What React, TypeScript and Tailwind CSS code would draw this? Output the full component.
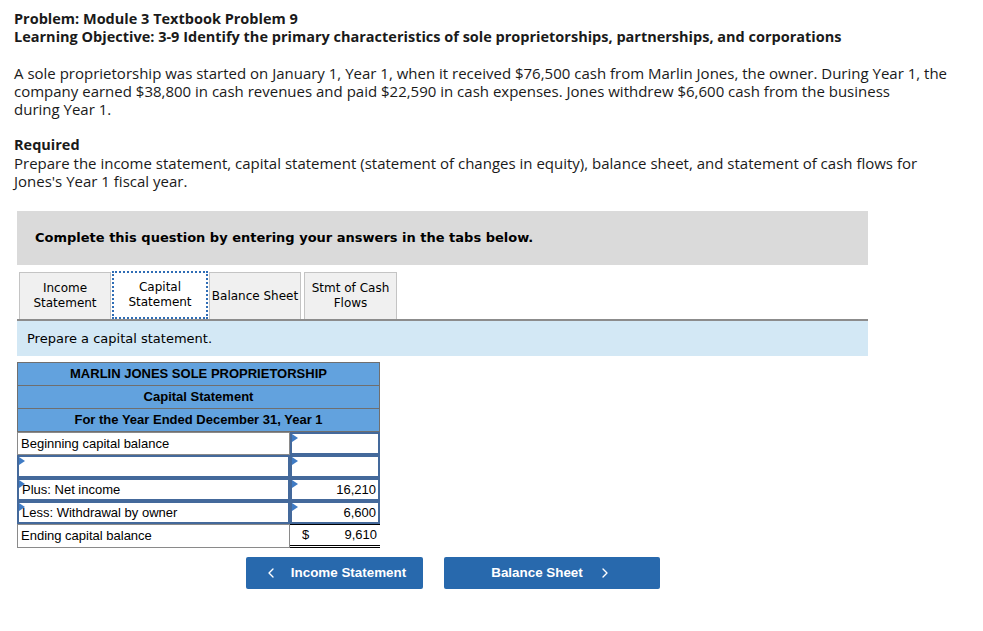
import { ChevronLeft, ChevronRight } from 'lucide-react';

function Flag() {
    return <span className="absolute left-0 top-0 w-0 h-0 border-t-[4px] border-b-[4px] border-l-[6px] border-t-transparent border-b-transparent border-l-[#3f7bc4]"></span>;
}

function LabelCell({ text, input }: { text?: string; input?: boolean }) {
    if (input) {
        return (
            <div className="relative h-[23px] w-[273px] border-2 border-[#44699b] flex items-center px-[3px]">
                <Flag />
                <span>{text}</span>
            </div>
        );
    }
    return (
        <div className="h-[23px] w-[273px] border border-[#8a8a8a] flex items-center px-[3px]">
            <span>{text}</span>
        </div>
    );
}

function ValueCell({ value }: { value?: string }) {
    return (
        <div className="relative h-[23px] w-[90px] border-2 border-[#44699b] flex items-center justify-end px-[2px]">
            <Flag />
            <span>{value}</span>
        </div>
    );
}

export default function App() {
    const body = { fontFamily: '"Open Sans", Lato, sans-serif' };
    const verdana = { fontFamily: '"DejaVu Sans", Verdana, sans-serif' };
    const arial = { fontFamily: '"Liberation Sans", Arial, sans-serif' };

    return (
        <div className="w-[983px] h-[631px] bg-white text-[#1a1a1a] pt-[10px]">
            <div className="pl-[14px] pr-[28px] text-[15px] leading-[18px]" style={body}>
                <p className="font-bold text-[14.5px]">Problem: Module 3 Textbook Problem 9</p>
                <p className="font-bold text-[14.5px]">Learning Objective: 3-9 Identify the primary characteristics of sole proprietorships, partnerships, and corporations</p>

                <p className="mt-[18px]">
                    A sole proprietorship was started on January 1, Year 1, when it received $76,500 cash from Marlin Jones, the owner. During Year 1, the company earned $38,800 in cash revenues and paid $22,590 in cash expenses. Jones withdrew $6,600 cash from the business<br />during Year 1.
                </p>

                <p className="font-bold text-[14.5px] mt-[18px]">Required</p>
                <p>
                    Prepare the income statement, capital statement (statement of changes in equity), balance sheet, and statement of cash flows for Jones's Year 1 fiscal year.
                </p>
            </div>

            {/* Question box */}
            <div className="ml-[17px] w-[851px] mt-[21px]" style={verdana}>
                <div className="h-[54px] bg-[#dadada] flex items-center px-[18px] text-[13px] font-bold text-black">
                    Complete this question by entering your answers in the tabs below.
                </div>

                {/* Tabs */}
                <div className="mt-[6px] flex items-end gap-[1px] pl-[2px] border-b-2 border-[#8c8c8c] text-[12px] leading-[15px] text-black">
                    <div className="w-[92px] h-[47px] bg-[#f0f0f0] border border-[#c4c4c4] border-b-0 flex items-center justify-center text-center">
                        Income<br />Statement
                    </div>
                    <div className="w-[96px] h-[48px] bg-white border-2 border-dotted border-[#2f6db5] flex items-center justify-center text-center">
                        Capital<br />Statement
                    </div>
                    <div className="w-[92px] h-[47px] bg-[#f0f0f0] border border-[#c4c4c4] border-b-0 flex items-center justify-center text-center">
                        Balance Sheet
                    </div>
                    <div className="ml-[2px] w-[93px] h-[47px] bg-[#f0f0f0] border border-[#c4c4c4] border-b-0 flex items-center justify-center text-center">
                        Stmt of Cash<br />Flows
                    </div>
                </div>

                <div className="h-[35px] bg-[#d3e8f5] flex items-center px-[10px] text-[13px] text-black">
                    Prepare a capital statement.
                </div>
            </div>

            {/* Capital statement table */}
            <div className="ml-[17px] mt-[6px] w-[363px] text-[13px] text-black" style={arial}>
                <div className="border border-[#6f6f6f] bg-[#62a2de] font-bold text-center">
                    <div className="h-[23px] flex items-center justify-center border-b border-[#6f6f6f]">MARLIN JONES SOLE PROPRIETORSHIP</div>
                    <div className="h-[23px] flex items-center justify-center border-b border-[#6f6f6f]">Capital Statement</div>
                    <div className="h-[22px] flex items-center justify-center">For the Year Ended December 31, Year 1</div>
                </div>
                <div className="flex">
                    <LabelCell text="Beginning capital balance" />
                    <ValueCell />
                </div>
                <div className="flex">
                    <LabelCell input />
                    <ValueCell />
                </div>
                <div className="flex">
                    <LabelCell text="Plus: Net income" input />
                    <ValueCell value="16,210" />
                </div>
                <div className="flex">
                    <LabelCell text="Less: Withdrawal by owner" input />
                    <ValueCell value="6,600" />
                </div>
                <div className="flex">
                    <div className="h-[24px] w-[273px] border border-[#8a8a8a] flex items-center px-[3px]">Ending capital balance</div>
                    <div className="h-[24px] w-[90px] border-t border-black border-b-[3px] border-b-black border-double flex items-center justify-between pl-[12px] pr-[3px]">
                        <span>$</span>
                        <span>9,610</span>
                    </div>
                </div>
            </div>

            {/* Navigation */}
            <div className="mt-[9px] ml-[246px] flex gap-[21px] text-[13.4px] font-bold text-white" style={arial}>
                <button className="w-[177px] h-[32px] bg-[#2869ad] rounded-[2px] flex items-center justify-center gap-[12px]">
                    <ChevronLeft size={16} strokeWidth={2} />
                    <span>Income Statement</span>
                </button>
                <button className="w-[216px] h-[32px] bg-[#2869ad] rounded-[2px] flex items-center justify-center gap-[14px]">
                    <span>Balance Sheet</span>
                    <ChevronRight size={16} strokeWidth={2} />
                </button>
            </div>
        </div>
    );
}
